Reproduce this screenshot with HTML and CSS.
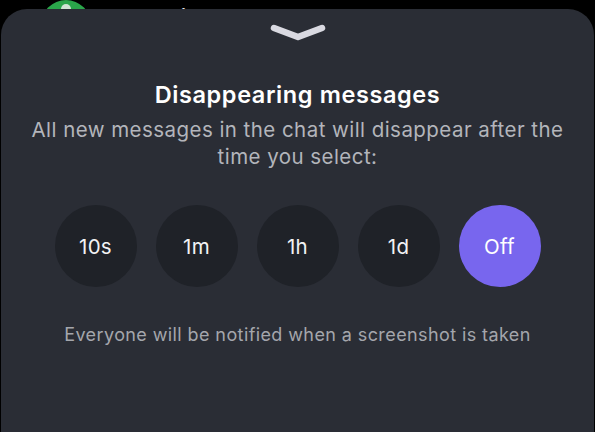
FILE: index.html
```html
<!DOCTYPE html>
<html lang="en">
<head>
    <meta charset="UTF-8">
    <title>Disappearing messages</title>
    <link rel="stylesheet" href="styles.css">
</head>
<body>

    <!-- Chat header behind the sheet -->
    <div class="chat-header">
        <div class="avatar"><span class="avatar-dot"></span></div>
        <span class="chat-name">Group in Group</span>
    </div>

    <!-- Bottom sheet -->
    <section class="sheet">
        <div class="handle">
            <svg width="58" height="22" viewBox="0 0 58 22">
                <path d="M5 6 L29 15 L53 6" fill="none" stroke="#d9d9e1" stroke-width="6.5" stroke-linecap="round" stroke-linejoin="round"/>
            </svg>
        </div>

        <h1 class="title">Disappearing messages</h1>
        <p class="subtitle">All new messages in the chat will disappear after the<br>time you select:</p>

        <div class="options">
            <button class="option">10s</button>
            <button class="option">1m</button>
            <button class="option">1h</button>
            <button class="option">1d</button>
            <button class="option activo">Off</button>
        </div>

        <p class="note">Everyone will be notified when a screenshot is taken</p>
    </section>

</body>
</html>
```

FILE: styles.css
```css
html, body {
    height: 100%;
}
body {
    font-family: Inter, "Noto Sans", sans-serif;
    margin: 0;
    background-color: #000;
    overflow: hidden;
    display: flex;
    flex-direction: column;
}
.chat-header {
    height: 9px;
    overflow: hidden;
    display: flex;
    align-items: flex-end;
    gap: 22px;
    padding-left: 41px;
    flex-shrink: 0;
}
.avatar {
    width: 50px;
    height: 50px;
    border-radius: 50%;
    background-color: #2aa54a;
    flex-shrink: 0;
    display: flex;
    justify-content: center;
    margin-bottom: -41px;
}
.avatar-dot {
    width: 10px;
    height: 10px;
    border-radius: 50%;
    background-color: #cfe3d3;
    margin-top: 4px;
}
.chat-name {
    color: #e8e8ea;
    font-size: 21px;
    font-weight: 600;
    line-height: 1;
    margin-bottom: -19px;
}
.sheet {
    flex: 1;
    background-color: #2a2d35;
    border-radius: 26px 26px 0 0;
    margin: 0 1px;
    display: flex;
    flex-direction: column;
    align-items: center;
    text-align: center;
}
.handle {
    margin-top: 13px;
    height: 22px;
    display: flex;
}
.title {
    color: #fff;
    font-size: 23.5px;
    font-weight: 600;
    letter-spacing: 0.6px;
    margin: 37px 0 0;
    line-height: 28px;
}
.subtitle {
    color: #b3b5bb;
    font-size: 20.5px;
    letter-spacing: 0.45px;
    line-height: 27px;
    margin: 7px 0 0;
}
.options {
    display: flex;
    gap: 19px;
    margin-top: 35px;
}
.option {
    width: 82px;
    height: 82px;
    border-radius: 50%;
    border: none;
    background-color: #1f2228;
    color: #f2f2f4;
    font-family: inherit;
    font-size: 20.5px;
    letter-spacing: 0.3px;
    cursor: pointer;
}
.option.activo {
    background-color: #7866ee;
    color: #fff;
}
.note {
    color: #a4a6ac;
    font-size: 18px;
    letter-spacing: 0.4px;
    margin: 36px 0 0;
    line-height: 24px;
}
```
